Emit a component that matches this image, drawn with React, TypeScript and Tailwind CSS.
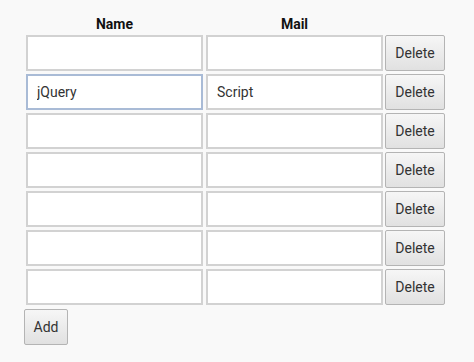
import { useState } from "react";

type Row = { id: number; name: string; mail: string };

const initialRows: Row[] = [
  { id: 1, name: "", mail: "" },
  { id: 2, name: "jQuery", mail: "Script" },
  { id: 3, name: "", mail: "" },
  { id: 4, name: "", mail: "" },
  { id: 5, name: "", mail: "" },
  { id: 6, name: "", mail: "" },
  { id: 7, name: "", mail: "" },
];

const buttonClass =
  "h-[36px] rounded-[2px] border border-[#b4b4b4] bg-gradient-to-b from-[#f6f6f6] to-[#e1e1e1] text-[14px] text-[#333]";

export default function App() {
  const [rows, setRows] = useState<Row[]>(initialRows);

  const update = (id: number, key: "name" | "mail", value: string) => {
    setRows(rows.map((r) => (r.id === id ? { ...r, [key]: value } : r)));
  };

  return (
    <div className="h-[362px] w-[474px] bg-[#f9f9f9] pl-[26px] pt-[14px] font-['Roboto',_sans-serif]">
      {/* header */}
      <div className="flex h-[21px] text-[14px] font-bold text-[#111]">
        <div className="w-[177px] text-center">Name</div>
        <div className="ml-[3px] w-[177px] text-center">Mail</div>
      </div>

      <div className="flex flex-col gap-[3px]">
        {rows.map((row) => (
          <div key={row.id} className="flex items-center">
            <input
              value={row.name}
              onChange={(e) => update(row.id, "name", e.target.value)}
              className={`h-[36px] w-[177px] border-2 bg-white px-[9px] text-[14px] text-[#333] outline-none ${
                row.id === 2 ? "border-[#a9bbd6]" : "border-[#d2d2d2]"
              }`}
            />
            <input
              value={row.mail}
              onChange={(e) => update(row.id, "mail", e.target.value)}
              className="ml-[3px] h-[36px] w-[177px] border-2 border-[#d2d2d2] bg-white px-[9px] text-[14px] text-[#333] outline-none"
            />
            <button
              onClick={() => setRows(rows.filter((r) => r.id !== row.id))}
              className={`ml-[2px] w-[60px] ${buttonClass}`}
            >
              Delete
            </button>
          </div>
        ))}
      </div>

      <button
        onClick={() =>
          setRows([...rows, { id: Date.now(), name: "", mail: "" }])
        }
        className={`-ml-[2px] mt-[4px] w-[44px] ${buttonClass}`}
      >
        Add
      </button>
    </div>
  );
}
